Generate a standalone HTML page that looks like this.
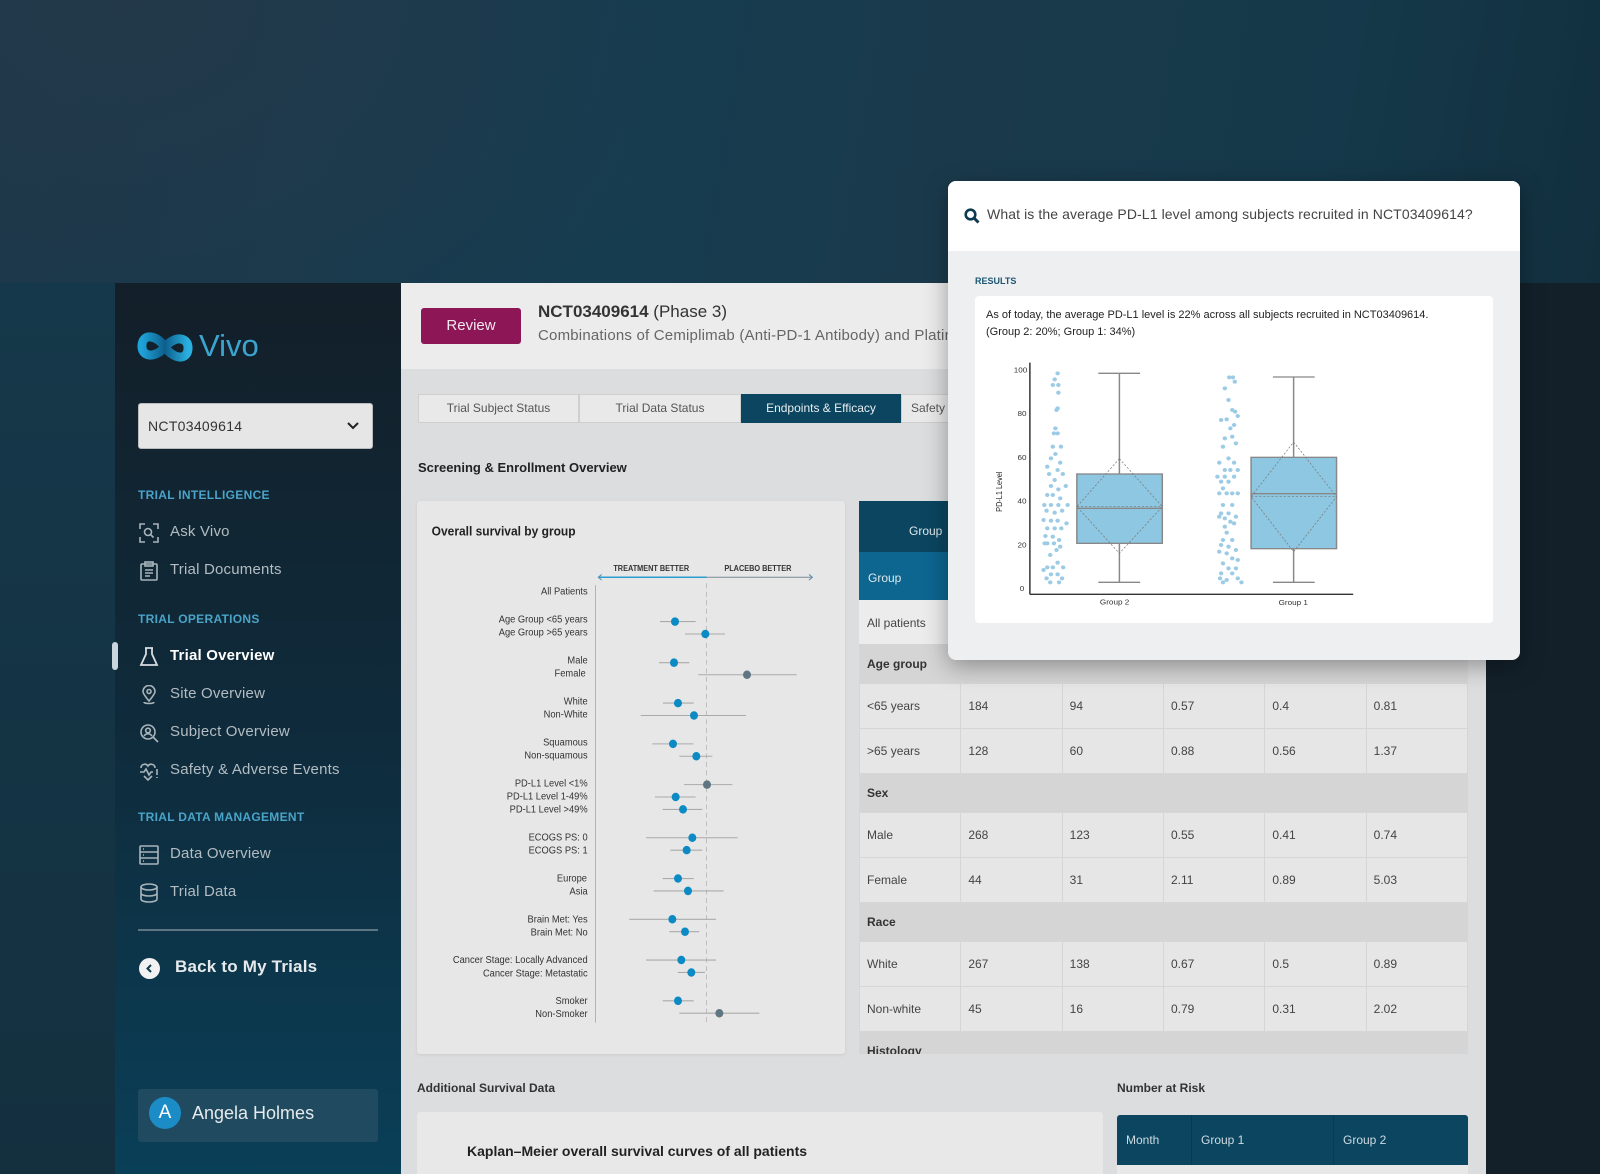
<!DOCTYPE html>
<html><head><meta charset="utf-8"><style>
*{margin:0;padding:0;box-sizing:border-box}
body{width:1600px;height:1174px;overflow:hidden;position:relative;font-family:"Liberation Sans",sans-serif;
background:radial-gradient(ellipse 600px 450px at 120px 0px,#23394a 0%,rgba(35,57,74,0) 100%),linear-gradient(100deg,#19374a 0%,#163c50 35%,#1a3a4b 55%,#15394a 75%,#12303f 90%,#0f2633 100%)}
.a{position:absolute}
.side{left:115px;top:283px;width:286px;height:891px;background:linear-gradient(180deg,#131f29 0%,#0f2b3b 50%,#0a3f58 100%)}
.sh{position:absolute;left:23px;font-size:12px;font-weight:bold;color:#4aa3c8;letter-spacing:.3px}
.it{position:absolute;left:55px;font-size:15px;color:#b3bcc2;letter-spacing:.2px}
.ic{position:absolute;left:24px;width:20px;height:20px}
.main{left:401px;top:283px;width:1085px;height:891px;background:#dcdddf;overflow:hidden}
.tab{position:absolute;top:111px;height:29px;background:#e9e9e9;border:1px solid #cfcfcf;font-size:12px;color:#555;text-align:center;line-height:27px}
td{border:1px solid #d6d6d6;font-size:12px;color:#444;padding-left:7px;height:45px;background:#e6e6e6}
tr.sec td{background:#d5d5d5;height:39px;color:#333;font-weight:bold}
</style></head><body>

<div class="a" style="left:1486px;top:283px;width:114px;height:891px;background:#13202a"></div>
<div class="a" style="left:0;top:283px;width:115px;height:891px;background:linear-gradient(180deg,#15384a,#14303f)"></div>

<!-- SIDEBAR -->
<div class="a side">
  <svg class="a" style="left:22px;top:46px" width="56" height="36" viewBox="0 0 56 36">
    <defs><linearGradient id="lg" x1="0" x2="1"><stop offset="0" stop-color="#1fa2d8"/><stop offset=".5" stop-color="#0d5f8c"/><stop offset="1" stop-color="#2ab0e0"/></linearGradient></defs>
    <path d="M28 18 C20 6 6 4 5 16 C4 28 18 30 28 18 C38 6 52 8 51 20 C50 32 36 30 28 18Z" fill="none" stroke="url(#lg)" stroke-width="9"/>
  </svg>
  <div class="a" style="left:84px;top:45px;font-size:31px;color:#3ba5d0">Vivo</div>
  <div class="a" style="left:23px;top:120px;width:235px;height:46px;background:#e6e6e6;border-radius:3px;border:1px solid #bbb">
    <div class="a" style="left:9px;top:14px;font-size:14px;color:#333;letter-spacing:.3px">NCT03409614</div>
    <svg class="a" style="left:207px;top:16px" width="14" height="12"><path d="M2 3l5 5 5-5" stroke="#222" stroke-width="2" fill="none"/></svg>
  </div>
  <div class="sh" style="top:205px">TRIAL INTELLIGENCE</div>
  <svg class="ic" style="top:240px" viewBox="0 0 20 20" fill="none" stroke="#a9b4bb" stroke-width="1.6"><path d="M1 6V1h5M14 1h5v5M19 14v5h-5M6 19H1v-5"/><circle cx="9" cy="9" r="3.5"/><path d="M11.5 11.5l3 3"/></svg>
  <div class="it" style="top:240px">Ask Vivo</div>
  <svg class="ic" style="top:278px" viewBox="0 0 20 20" fill="none" stroke="#a9b4bb" stroke-width="1.6"><rect x="2" y="3" width="16" height="16" rx="1"/><rect x="6" y="1" width="8" height="4"/><path d="M6 9h8M6 12h8M6 15h5"/></svg>
  <div class="it" style="top:278px">Trial Documents</div>
  <div class="sh" style="top:329px">TRIAL OPERATIONS</div>
  <div class="a" style="left:-3px;top:359px;width:6px;height:28px;background:#c9d6de;border-radius:3px"></div>
  <svg class="ic" style="top:364px" viewBox="0 0 20 20" fill="none" stroke="#d8dde0" stroke-width="1.8"><path d="M6 1h8M7 1v6L2 18h16L13 7V1"/></svg>
  <div class="it" style="top:364px;color:#fff;font-weight:bold">Trial Overview</div>
  <svg class="ic" style="top:402px" viewBox="0 0 20 20" fill="none" stroke="#a9b4bb" stroke-width="1.6"><path d="M10 16C5 10 4 8 4 6.5a6 6 0 0 1 12 0C16 8 15 10 10 16Z"/><circle cx="10" cy="6.5" r="2"/><path d="M5 17c0 2 10 2 10 0"/></svg>
  <div class="it" style="top:402px">Site Overview</div>
  <svg class="ic" style="top:440px" viewBox="0 0 20 20" fill="none" stroke="#a9b4bb" stroke-width="1.6"><circle cx="9" cy="9" r="7"/><circle cx="9" cy="7.5" r="2.3"/><path d="M5 13c2-3 6-3 8 0M14 14l5 5"/></svg>
  <div class="it" style="top:440px">Subject Overview</div>
  <svg class="ic" style="top:478px" viewBox="0 0 20 20" fill="none" stroke="#a9b4bb" stroke-width="1.6"><path d="M2 7c0-4 5-5 7-2 2-3 7-2 7 2M1 11h4l2-3 3 6 2-3h2M5 15l4 4 4-4M18 8v6M18 16v1"/></svg>
  <div class="it" style="top:478px">Safety &amp; Adverse Events</div>
  <div class="sh" style="top:527px">TRIAL DATA MANAGEMENT</div>
  <svg class="ic" style="top:562px" viewBox="0 0 20 20" fill="none" stroke="#a9b4bb" stroke-width="1.6"><rect x="1" y="1" width="18" height="18" rx="1"/><path d="M1 7h18M1 13h18"/><path d="M4 4h1M4 10h1M4 16h1"/></svg>
  <div class="it" style="top:562px">Data Overview</div>
  <svg class="ic" style="top:600px" viewBox="0 0 20 20" fill="none" stroke="#a9b4bb" stroke-width="1.6"><ellipse cx="10" cy="4" rx="8" ry="3"/><path d="M2 4v12c0 4 16 4 16 0V4M2 10c0 4 16 4 16 0"/></svg>
  <div class="it" style="top:600px">Trial Data</div>
  <div class="a" style="left:23px;top:646px;width:240px;height:2px;background:#5d7583"></div>
  <div class="a" style="left:24px;top:675px;width:21px;height:21px;border-radius:50%;background:#f2f2f2"></div>
  <svg class="a" style="left:29px;top:680px" width="11" height="11"><path d="M7 2L3.5 5.5 7 9" stroke="#0d3a50" stroke-width="2" fill="none"/></svg>
  <div class="a" style="left:60px;top:674px;font-size:17px;color:#e6eaec;font-weight:bold;letter-spacing:.2px">Back to My Trials</div>
  <div class="a" style="left:23px;top:806px;width:240px;height:53px;background:#1f4a5f;border-radius:3px"></div>
  <div class="a" style="left:34px;top:814px;width:32px;height:32px;border-radius:50%;background:#1b8cc6;color:#fff;font-size:19px;text-align:center;line-height:32px">A</div>
  <div class="a" style="left:77px;top:820px;font-size:18px;color:#e6eaec">Angela Holmes</div>
</div>

<!-- MAIN -->
<div class="a main">
  <div class="a" style="left:0;top:0;width:1085px;height:86px;background:#ececec"></div>
  <div class="a" style="left:20px;top:25px;width:100px;height:36px;background:#8c1656;border-radius:3px;color:#f3e6ee;font-size:15px;text-align:center;line-height:36px">Review</div>
  <div class="a" style="left:137px;top:19px;font-size:17px;color:#333;white-space:nowrap"><b>NCT03409614</b> (Phase 3)</div>
  <div class="a" style="left:137px;top:44px;font-size:15px;color:#666;white-space:nowrap;letter-spacing:.2px">Combinations of Cemiplimab (Anti-PD-1 Antibody) and Platinum-based Doublet Chemotherapy</div>
  <div class="tab" style="left:17px;width:161px">Trial Subject Status</div>
  <div class="tab" style="left:178px;width:162px">Trial Data Status</div>
  <div class="tab" style="left:340px;width:160px;background:#0b4560;color:#e8eef1;border-color:#0b4560">Endpoints &amp; Efficacy</div>
  <div class="tab" style="left:500px;width:120px;text-align:left;padding-left:9px">Safety</div>
  <div class="a" style="left:17px;top:177px;font-size:13px;color:#222;font-weight:bold">Screening &amp; Enrollment Overview</div>

  <div class="a" style="left:16px;top:218px;width:428px;height:553px;background:#e7e7e7;border-radius:3px;box-shadow:0 1px 3px rgba(0,0,0,.08)"></div>

  <div class="a" style="left:458px;top:218px;width:609px;height:553px;overflow:hidden;background:#e6e6e6">
    <div class="a" style="left:0;top:0;width:609px;height:51px;background:#0b4560;color:#dfe7ec;font-size:12px;padding:23px 0 0 50px">Group</div>
    <div class="a" style="left:0;top:51px;width:609px;height:48px;background:#0d6690;color:#dfe7ec;font-size:12px;padding:19px 0 0 9px">Group</div>
    <div class="a" style="left:0;top:99px;width:609px;height:44px;background:#ececec;color:#444;font-size:12px;padding:16px 0 0 8px">All patients</div>
    <table class="a" style="left:0;top:143px;width:609px;border-collapse:collapse;table-layout:fixed">
      <tr class="sec"><td colspan="6">Age group</td></tr>
      <tr><td>&lt;65 years</td><td>184</td><td>94</td><td>0.57</td><td>0.4</td><td>0.81</td></tr>
      <tr><td>&gt;65 years</td><td>128</td><td>60</td><td>0.88</td><td>0.56</td><td>1.37</td></tr>
      <tr class="sec"><td colspan="6">Sex</td></tr>
      <tr><td>Male</td><td>268</td><td>123</td><td>0.55</td><td>0.41</td><td>0.74</td></tr>
      <tr><td>Female</td><td>44</td><td>31</td><td>2.11</td><td>0.89</td><td>5.03</td></tr>
      <tr class="sec"><td colspan="6">Race</td></tr>
      <tr><td>White</td><td>267</td><td>138</td><td>0.67</td><td>0.5</td><td>0.89</td></tr>
      <tr><td>Non-white</td><td>45</td><td>16</td><td>0.79</td><td>0.31</td><td>2.02</td></tr>
      <tr class="sec"><td colspan="6">Histology</td></tr>
    </table>
  </div>

  <div class="a" style="left:16px;top:798px;font-size:12px;color:#333;font-weight:bold">Additional Survival Data</div>
  <div class="a" style="left:16px;top:829px;width:686px;height:80px;background:#e8e8e8;border-radius:3px"></div>
  <div class="a" style="left:66px;top:860px;font-size:14px;color:#222;font-weight:bold">Kaplan–Meier overall survival curves of all patients</div>
  <div class="a" style="left:716px;top:798px;font-size:12px;color:#333;font-weight:bold">Number at Risk</div>
  <div class="a" style="left:716px;top:832px;width:351px;height:50px;background:#0b4560;border-radius:3px 3px 0 0;color:#cfdbe2;font-size:12px">
    <span class="a" style="left:9px;top:18px">Month</span><span class="a" style="left:84px;top:18px">Group 1</span><span class="a" style="left:226px;top:18px">Group 2</span>
    <div class="a" style="left:74px;top:0;width:1px;height:50px;background:#0a3a52"></div>
    <div class="a" style="left:216px;top:0;width:1px;height:50px;background:#0a3a52"></div>
  </div>
  <div class="a" style="left:716px;top:882px;width:351px;height:20px;background:#e8e8e8"></div>
</div>

<!-- FOREST PLOT -->
<svg class="a" style="left:415px;top:500px" width="440" height="560" viewBox="0 0 1320 1580" preserveAspectRatio="none" font-family="Liberation Sans, sans-serif">
  <text x="50" y="100" font-size="36" font-weight="bold" fill="#222">Overall survival by group</text>
  <text x="595" y="200" font-size="22" font-weight="bold" fill="#333">TREATMENT BETTER</text>
  <text x="928" y="200" font-size="22" font-weight="bold" fill="#333">PLACEBO BETTER</text>
  <line x1="550" y1="218" x2="875" y2="218" stroke="#2b9cd0" stroke-width="4"/>
  <line x1="875" y1="218" x2="1192" y2="218" stroke="#7b8b95" stroke-width="3"/>
  <path d="M560 210l-10 8 10 8M1182 210l10 8-10 8" stroke="#5a8fb0" stroke-width="3" fill="none"/>
  <line x1="541" y1="240" x2="541" y2="1475" stroke="#999" stroke-width="2"/>
  <line x1="875" y1="235" x2="875" y2="1475" stroke="#aaa" stroke-width="2" stroke-dasharray="14 10"/>
  <g font-size="28" fill="#333" text-anchor="end">
    <text x="518" y="267">All Patients</text>
    <text x="518" y="345">Age Group &lt;65 years</text><text x="518" y="382">Age Group &gt;65 years</text>
    <text x="518" y="461">Male</text><text x="512" y="498">Female</text>
    <text x="518" y="577">White</text><text x="518" y="614">Non-White</text>
    <text x="518" y="693">Squamous</text><text x="518" y="730">Non-squamous</text>
    <text x="518" y="808">PD-L1 Level &lt;1%</text><text x="518" y="845">PD-L1 Level 1-49%</text><text x="518" y="882">PD-L1 Level &gt;49%</text>
    <text x="518" y="960">ECOGS PS: 0</text><text x="518" y="997">ECOGS PS: 1</text>
    <text x="516" y="1076">Europe</text><text x="518" y="1113">Asia</text>
    <text x="518" y="1192">Brain Met: Yes</text><text x="518" y="1229">Brain Met: No</text>
    <text x="518" y="1306">Cancer Stage: Locally Advanced</text><text x="518" y="1345">Cancer Stage: Metastatic</text>
    <text x="518" y="1422">Smoker</text><text x="518" y="1459">Non-Smoker</text>
  </g>
  <g stroke="#aaa" stroke-width="3">
    <line x1="735" y1="343" x2="842" y2="343"/><line x1="810" y1="378" x2="930" y2="378"/>
    <line x1="732" y1="459" x2="823" y2="459"/><line x1="850" y1="493" x2="1145" y2="493"/>
    <line x1="744" y1="573" x2="836" y2="573"/><line x1="677" y1="608" x2="993" y2="608"/>
    <line x1="712" y1="688" x2="836" y2="688"/><line x1="793" y1="723" x2="892" y2="723"/>
    <line x1="807" y1="803" x2="952" y2="803"/><line x1="720" y1="838" x2="842" y2="838"/><line x1="743" y1="873" x2="862" y2="873"/>
    <line x1="693" y1="953" x2="968" y2="953"/><line x1="766" y1="988" x2="862" y2="988"/>
    <line x1="743" y1="1068" x2="836" y2="1068"/><line x1="716" y1="1103" x2="926" y2="1103"/>
    <line x1="643" y1="1183" x2="903" y2="1183"/><line x1="763" y1="1218" x2="853" y2="1218"/>
    <line x1="693" y1="1298" x2="903" y2="1298"/><line x1="788" y1="1333" x2="870" y2="1333"/>
    <line x1="743" y1="1413" x2="836" y2="1413"/><line x1="793" y1="1448" x2="1033" y2="1448"/>
  </g>
  <g fill="#0c8ac4">
    <circle cx="780" cy="343" r="12"/><circle cx="871" cy="378" r="12"/><circle cx="777" cy="459" r="12"/>
    <circle cx="789" cy="573" r="12"/><circle cx="837" cy="608" r="12"/><circle cx="774" cy="688" r="12"/><circle cx="844" cy="723" r="12"/>
    <circle cx="782" cy="838" r="12"/><circle cx="804" cy="873" r="12"/><circle cx="832" cy="953" r="12"/><circle cx="815" cy="988" r="12"/>
    <circle cx="789" cy="1068" r="12"/><circle cx="819" cy="1103" r="12"/><circle cx="772" cy="1183" r="12"/><circle cx="810" cy="1218" r="12"/>
    <circle cx="799" cy="1298" r="12"/><circle cx="829" cy="1333" r="12"/><circle cx="789" cy="1413" r="12"/>
  </g>
  <g fill="#5f7682"><circle cx="996" cy="493" r="12"/><circle cx="876" cy="803" r="12"/><circle cx="913" cy="1448" r="12"/></g>
</svg>

<!-- POPUP -->
<div class="a" style="left:948px;top:181px;width:572px;height:479px;background:#eeeff1;border-radius:8px;box-shadow:0 6px 24px rgba(0,0,0,.35);overflow:hidden">
  <div class="a" style="left:0;top:0;width:572px;height:70px;background:#fff"></div>
  <svg class="a" style="left:16px;top:27px" width="16" height="16" viewBox="0 0 16 16"><circle cx="6.5" cy="6.5" r="4.8" stroke="#0d3a50" stroke-width="2.6" fill="none"/><path d="M10 10l4.5 4.5" stroke="#0d3a50" stroke-width="3"/></svg>
  <div class="a" style="left:39px;top:25px;font-size:14px;color:#444;white-space:nowrap;letter-spacing:.1px">What is the average PD-L1 level among subjects recruited in NCT03409614?</div>
  <div class="a" style="left:27px;top:95px;font-size:9px;font-weight:bold;color:#1c5673">RESULTS</div>
  <div class="a" style="left:27px;top:115px;width:518px;height:327px;background:#fff;border-radius:4px"></div>
  <div class="a" style="left:38px;top:126px;font-size:11px;color:#222;line-height:17px;white-space:nowrap">As of today, the average PD-L1 level is 22% across all subjects recruited in NCT03409614.<br>(Group 2: 20%; Group 1: 34%)</div>
</div>
<svg class="a" style="left:940px;top:180px" width="580" height="480" viewBox="0 0 1568 1440" preserveAspectRatio="none" font-family="Liberation Sans, sans-serif">
  <line x1="243" y1="548" x2="243" y2="1243" stroke="#333" stroke-width="4"/>
  <line x1="243" y1="1243" x2="1117" y2="1243" stroke="#333" stroke-width="4"/>
  <g font-size="22" fill="#333" text-anchor="end"><text x="236" y="578">100</text><text x="234" y="708">80</text><text x="234" y="840">60</text><text x="234" y="971">40</text><text x="234" y="1102">20</text><text x="228" y="1233">0</text></g>
  <text transform="translate(168 935) rotate(-90)" font-size="22" fill="#222" text-anchor="middle">PD-L1 Level</text>
  <text x="472" y="1273" font-size="22" fill="#333" text-anchor="middle">Group 2</text>
  <text x="955" y="1275" font-size="22" fill="#333" text-anchor="middle">Group 1</text>
  <g fill="#9ccbe5">
  <circle cx="318" cy="580" r="6"/><circle cx="310" cy="598" r="6"/><circle cx="320" cy="615" r="6"/><circle cx="305" cy="615" r="6"/><circle cx="320" cy="638" r="6"/><circle cx="315" cy="690" r="6"/><circle cx="318" cy="685" r="6"/><circle cx="312" cy="745" r="6"/><circle cx="318" cy="760" r="6"/><circle cx="308" cy="760" r="6"/><circle cx="305" cy="800" r="6"/><circle cx="327" cy="800" r="6"/><circle cx="300" cy="835" r="6"/><circle cx="312" cy="822" r="6"/><circle cx="325" cy="848" r="6"/><circle cx="290" cy="860" r="6"/><circle cx="318" cy="870" r="6"/><circle cx="332" cy="882" r="6"/><circle cx="295" cy="882" r="6"/><circle cx="310" cy="900" r="6"/><circle cx="340" cy="918" r="6"/><circle cx="300" cy="918" r="6"/><circle cx="320" cy="928" r="6"/><circle cx="290" cy="945" r="6"/><circle cx="305" cy="945" r="6"/><circle cx="325" cy="955" r="6"/><circle cx="282" cy="975" r="6"/><circle cx="300" cy="975" r="6"/><circle cx="320" cy="975" r="6"/><circle cx="345" cy="975" r="6"/><circle cx="288" cy="992" r="6"/><circle cx="310" cy="998" r="6"/><circle cx="330" cy="992" r="6"/><circle cx="280" cy="1020" r="6"/><circle cx="300" cy="1022" r="6"/><circle cx="318" cy="1022" r="6"/><circle cx="342" cy="1030" r="6"/><circle cx="290" cy="1045" r="6"/><circle cx="310" cy="1045" r="6"/><circle cx="328" cy="1045" r="6"/><circle cx="285" cy="1068" r="6"/><circle cx="305" cy="1070" r="6"/><circle cx="322" cy="1080" r="6"/><circle cx="290" cy="1090" r="6"/><circle cx="308" cy="1090" r="6"/><circle cx="325" cy="1100" r="6"/><circle cx="298" cy="1125" r="6"/><circle cx="318" cy="1148" r="6"/><circle cx="290" cy="1162" r="6"/><circle cx="305" cy="1162" r="6"/><circle cx="333" cy="1162" r="6"/><circle cx="280" cy="1170" r="6"/><circle cx="300" cy="1183" r="6"/><circle cx="318" cy="1183" r="6"/><circle cx="288" cy="1195" r="6"/><circle cx="330" cy="1195" r="6"/><circle cx="298" cy="1207" r="6"/><circle cx="322" cy="1207" r="6"/><circle cx="283" cy="1090" r="6"/><circle cx="315" cy="1110" r="6"/>
  <circle cx="782" cy="592" r="6"/><circle cx="792" cy="592" r="6"/><circle cx="770" cy="625" r="6"/><circle cx="797" cy="605" r="6"/><circle cx="780" cy="660" r="6"/><circle cx="790" cy="690" r="6"/><circle cx="798" cy="695" r="6"/><circle cx="760" cy="720" r="6"/><circle cx="775" cy="718" r="6"/><circle cx="805" cy="708" r="6"/><circle cx="795" cy="735" r="6"/><circle cx="785" cy="745" r="6"/><circle cx="770" cy="775" r="6"/><circle cx="790" cy="770" r="6"/><circle cx="800" cy="790" r="6"/><circle cx="765" cy="800" r="6"/><circle cx="780" cy="835" r="6"/><circle cx="795" cy="848" r="6"/><circle cx="755" cy="848" r="6"/><circle cx="770" cy="870" r="6"/><circle cx="785" cy="870" r="6"/><circle cx="805" cy="870" r="6"/><circle cx="750" cy="890" r="6"/><circle cx="770" cy="890" r="6"/><circle cx="795" cy="890" r="6"/><circle cx="760" cy="905" r="6"/><circle cx="780" cy="905" r="6"/><circle cx="765" cy="925" r="6"/><circle cx="790" cy="940" r="6"/><circle cx="805" cy="940" r="6"/><circle cx="755" cy="940" r="6"/><circle cx="775" cy="940" r="6"/><circle cx="765" cy="975" r="6"/><circle cx="790" cy="975" r="6"/><circle cx="780" cy="1000" r="6"/><circle cx="760" cy="1000" r="6"/><circle cx="800" cy="1010" r="6"/><circle cx="770" cy="1015" r="6"/><circle cx="785" cy="1025" r="6"/><circle cx="755" cy="1010" r="6"/><circle cx="795" cy="1030" r="6"/><circle cx="770" cy="1040" r="6"/><circle cx="775" cy="1058" r="6"/><circle cx="765" cy="1080" r="6"/><circle cx="790" cy="1080" r="6"/><circle cx="760" cy="1095" r="6"/><circle cx="780" cy="1100" r="6"/><circle cx="800" cy="1110" r="6"/><circle cx="755" cy="1115" r="6"/><circle cx="775" cy="1120" r="6"/><circle cx="790" cy="1135" r="6"/><circle cx="805" cy="1140" r="6"/><circle cx="765" cy="1150" r="6"/><circle cx="780" cy="1165" r="6"/><circle cx="800" cy="1165" r="6"/><circle cx="760" cy="1180" r="6"/><circle cx="790" cy="1180" r="6"/><circle cx="757" cy="1195" r="6"/><circle cx="775" cy="1200" r="6"/><circle cx="805" cy="1195" r="6"/><circle cx="765" cy="1207" r="6"/><circle cx="815" cy="1207" r="6"/>
  </g>
  <g stroke="#888" stroke-width="4" fill="none">
    <line x1="485" y1="580" x2="485" y2="882"/><line x1="485" y1="1090" x2="485" y2="1207"/>
    <line x1="428" y1="580" x2="541" y2="580"/><line x1="428" y1="1207" x2="541" y2="1207"/>
    <rect x="370" y="882" width="231" height="208" fill="#8ec7e1"/>
    <line x1="370" y1="985" x2="601" y2="985"/>
    <line x1="956" y1="591" x2="956" y2="832"/><line x1="956" y1="1106" x2="956" y2="1207"/>
    <line x1="900" y1="591" x2="1013" y2="591"/><line x1="900" y1="1207" x2="1013" y2="1207"/>
    <rect x="841" y="832" width="231" height="274" fill="#8ec7e1"/>
    <line x1="841" y1="941" x2="1072" y2="941"/>
  </g>
  <g stroke="#777" stroke-width="2" fill="none" stroke-dasharray="6 5">
    <path d="M485 836L601 980 485 1120 370 980Z"/><line x1="370" y1="980" x2="601" y2="980"/>
    <path d="M956 786L1072 950 956 1115 841 950Z"/><line x1="841" y1="950" x2="1072" y2="950"/>
  </g>
</svg>
</body></html>
